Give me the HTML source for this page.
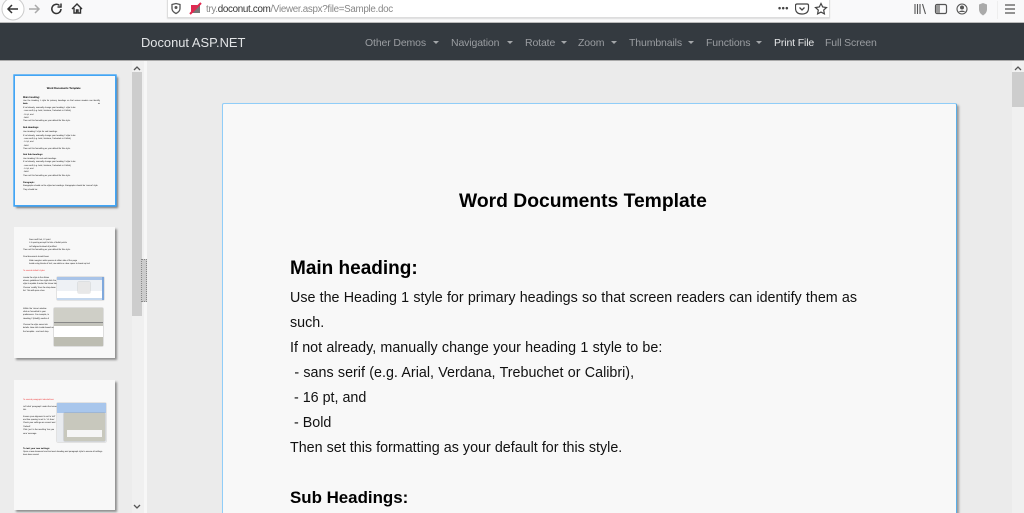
<!DOCTYPE html>
<html><head><meta charset="utf-8"><style>
html,body{margin:0;padding:0;width:1024px;height:513px;overflow:hidden;background:#ebebeb;font-family:"Liberation Sans",sans-serif}
div,span,svg{position:absolute}
#w{left:0;top:0;width:1024px;height:513px;overflow:hidden;background:#ebebeb}
.t{white-space:nowrap;color:#000}
.l{left:290px;font-size:14.3px;line-height:16px;white-space:nowrap;color:#111}
.j{width:567px;text-align:justify;text-align-last:justify}
.n{top:36px;font-size:10.5px;line-height:14px;color:#9a9da1;white-space:nowrap;letter-spacing:-.13px}
.c{top:41px;width:0;height:0;border-left:3.5px solid transparent;border-right:3.5px solid transparent;border-top:3px solid #a3a6a9}
.p{background:#f8f8f8;box-shadow:2px 2px 2px #8f8f8f;left:15px;width:100px;height:130px}
.x{font-size:2.05px;line-height:3px;white-space:nowrap;color:#111;left:8px;text-rendering:geometricPrecision}
.m{line-height:3.4px}
.b{font-weight:bold;color:#000;font-size:2.5px}
</style></head><body><div id="w">
<div style="left:0;top:0;width:1024px;height:23px;background:#f9f9fa;border-bottom:1px solid #bbb;box-sizing:border-box"></div>
<div style="left:167px;top:-2px;width:663px;height:20px;background:#fff;border:1px solid #ddd;box-sizing:border-box;box-shadow:0 1px 1px #ddd"></div>
<svg style="left:0;top:0" width="100" height="22" viewBox="0 0 100 22" fill="none">
<circle cx="13" cy="9" r="11" fill="#fff" stroke="#ccc"/>
<path d="M18 9H8M12 5L8 9l4 4" stroke="#333" stroke-width="1.5"/>
<path d="M39 9H29M35 5l4 4-4 4" stroke="#aaa" stroke-width="1.5"/>
<path d="M61 9a4.6 4.6 0 1 1-1.5-3.5M61 3.5V7h-3.5" stroke="#333" stroke-width="1.5"/>
<path d="M72 9l5-5 5 5M74 8v5h2.500v-3h1.500v3h2.500V8" stroke="#333" stroke-width="1.4"/>
</svg>
<svg style="left:170px;top:1px" width="35" height="16" viewBox="0 0 35 16" fill="none">
<path d="M2 3.500l4-1 4 1v4q0 3-4 5q-4-2-4-5z" stroke="#555" stroke-width="1.300"/>
<circle cx="6" cy="6.500" r="1.500" fill="#555"/>
<rect x="21" y="4" width="9" height="8" fill="#777"/><path d="M20 13L31 2" stroke="#e22850" stroke-width="2"/>
<path d="M21 4h6l-6 7z" fill="#e22850"/>
</svg>
<div class="t" style="left:206px;top:3px;font-size:9.800px;line-height:13px;color:#888;letter-spacing:-.3px">try.<span style="position:static;color:#333">doconut.com</span>/Viewer.aspx?file=Sample.doc</div>
<div class="t" style="left:778px;top:2px;font-size:9px;line-height:12px;color:#444;font-weight:bold;letter-spacing:.5px">•••</div>
<svg style="left:795px;top:1px" width="36" height="16" viewBox="0 0 36 16" fill="none">
<path d="M2 3h10q1.500 0 1.500 1.500V7q0 6-6.500 6Q.5 13 .5 7V4.500Q.5 3 2 3z" stroke="#444" stroke-width="1.200"/>
<path d="M4.500 6.500L7 9l2.500-2.500" stroke="#444" stroke-width="1.300"/>
<path d="M26 2.500l1.700 3.500 3.800.5-2.800 2.600.7 3.800-3.400-1.800-3.400 1.800.7-3.800-2.800-2.600 3.800-.5z" stroke="#444" stroke-width="1.200"/>
</svg>
<svg style="left:910px;top:1px" width="114" height="18" viewBox="0 0 114 18" fill="none">
<path d="M5 3v10M7.500 3v10M10 3v10M12.500 3l3 10" stroke="#555" stroke-width="1.100"/>
<rect x="25.500" y="3.500" width="11" height="9" rx="1.500" stroke="#555" stroke-width="1.200"/><rect x="26" y="4" width="4" height="8" fill="#999"/>
<circle cx="52" cy="8" r="5" stroke="#555" stroke-width="1.100"/><circle cx="52" cy="6.500" r="2" fill="#555"/><path d="M48.500 11q3.500-3 7 0" fill="#555"/>
<path d="M69 3.500l4-1.500 4 1.500v5q0 3.500-4 6q-4-2.500-4-6z" fill="#aaa"/>
<path d="M95 4h10M95 8h10M95 12h10" stroke="#555" stroke-width="1.300"/>
<path d="M87.500 0v20" stroke="#eee"/>
</svg>

<div style="left:0;top:23px;width:1024px;height:37px;background:#343a40;border-bottom:1px solid #aaa"></div>
<div class="t" style="left:141px;top:35px;font-size:12.900px;line-height:15px;color:#e2e4e6">Doconut ASP.NET</div>
<div class="n" style="left:365px">Other Demos</div><div class="c" style="left:433px"></div>
<div class="n" style="left:451px">Navigation</div><div class="c" style="left:507px"></div>
<div class="n" style="left:525px">Rotate</div><div class="c" style="left:561px"></div>
<div class="n" style="left:578px">Zoom</div><div class="c" style="left:611px"></div>
<div class="n" style="left:629px">Thumbnails</div><div class="c" style="left:688px"></div>
<div class="n" style="left:706px">Functions</div><div class="c" style="left:756px"></div>
<div class="n" style="left:774px;color:#e6e7e8">Print File</div>
<div class="n" style="left:825px">Full Screen</div>

<!-- left panel -->
<div style="left:0;top:61px;width:132px;height:452px;background:#ececec"></div>
<div style="left:132px;top:61px;width:12px;height:452px;background:#f0f0f0"></div>
<div style="left:132px;top:72px;width:10px;height:244px;background:#cdcdcd"></div>
<svg style="left:131px;top:63px" width="12" height="450" viewBox="0 0 12 450" fill="none">
<path d="M3 7l3-3 3 3" stroke="#555" stroke-width="1.300"/><path d="M3 442l3 3 3-3" stroke="#555" stroke-width="1.300"/></svg>
<div style="left:144px;top:61px;width:3px;height:452px;background:#f7f7f7"></div>
<div style="left:141px;top:259px;width:6px;height:43px;background:#cbcbcb;border:1px dotted #888;box-sizing:border-box"></div>

<!-- thumb 1 -->
<div class="p" style="top:75px;border:1px solid #42a5f5;left:14px;width:100px;height:129px;box-shadow:0 0 0 .7px #42a5f5,2px 2px 2px #777"><div class="x b" style="left:31.700px;top:10.800px;font-size:2.650px">Word Documents Template</div>
<div class="x b" style="top:19.800px">Main heading:</div>
<div class="x" style="top:23.800px;width:77px;white-space:normal;text-align:justify;text-align-last:justify">Use the Heading 1 style for primary headings so that screen readers can identify them as</div>
<div class="x" style="top:26.800px">such.</div><div class="x" style="top:30.500px">If not already, manually change your heading 1 style to be:</div>
<div class="x" style="top:34px">- sans serif (e.g. Arial, Verdana, Trebuchet or Calibri),</div><div class="x" style="top:37.500px"> - 16 pt, and</div><div class="x" style="top:40.500px"> - Bold</div><div class="x" style="top:44px">Then set this formatting as your default for this style.</div>
<div class="x b" style="top:50.800px;font-size:2.300px">Sub Headings:</div>
<div class="x" style="top:54.800px">Use Heading 2 style for sub headings.</div><div class="x" style="top:58.500px">If not already, manually change your heading 2 style to be:</div><div class="x" style="top:61.800px">- sans serif (e.g. Arial, Verdana, Trebuchet or Calibri),</div><div class="x" style="top:65.200px"> - 14 pt, and</div><div class="x" style="top:68.500px"> - Bold</div><div class="x" style="top:71.800px">Then set this formatting as your default for this style.</div>
<div class="x b" style="top:78.200px;font-size:2.200px">Sub Sub Headings:</div>
<div class="x" style="top:81.800px">Use Heading 3 for sub sub headings.</div><div class="x" style="top:85.200px">If not already, manually change your heading 3 style to be:</div><div class="x" style="top:88.500px">- sans serif (e.g. Arial, Verdana, Trebuchet or Calibri),</div><div class="x" style="top:91.800px"> - 14 pt, and</div><div class="x" style="top:95.200px"> - Bold</div><div class="x" style="top:99.200px">Then set this formatting as your default for this style.</div>
<div class="x b" style="top:105.800px;font-size:2.200px">Paragraph:</div>
<div class="x" style="top:109.200px">Paragraphs should not be styled as headings. Paragraphs should be ‘normal’ style.</div><div class="x" style="top:112.500px">They should be:</div></div>

<!-- thumb 2 -->
<div class="p" style="top:227px;left:14px;width:101px;height:131px">
<div class="x" style="left:15px;top:11.500px">Sans serif font, 12 point</div><div class="x" style="left:15px;top:15px">1.5 spacing except for lists of bullet points</div><div class="x" style="left:15px;top:18.500px">Left aligned instead of justified</div><div class="x" style="left:9px;top:22px">Then set this formatting as your default for this style.</div>
<div class="x" style="left:9px;top:29px">Final document should have:</div><div class="x" style="left:15px;top:32.500px">Wide margins: wide spaces at either side of the page</div><div class="x" style="left:15px;top:36px">Avoid using blocks of text; use white or clear space to break up text</div>
<div class="x" style="left:9px;top:43px;color:#e33">To amend default styles:</div>
<div class="x m" style="left:9px;top:49.500px">Locate the style in the ribbon<br>above; guidelines then right click the<br>style to update it under the Home tab.<br>Choose ‘modify’ from the drop down<br>list. This will open a box.</div>
<div style="left:43px;top:50px;width:47px;height:23px;background:linear-gradient(#a9c4e8 0 3px,#eef1f5 3px 14px,#fff 14px 21px,#c5d8ee 21px);box-shadow:0 0 1px #888"></div>
<div style="left:88px;top:50px;width:2px;height:23px;background:#7fa8dc"></div>
<div style="left:64px;top:55px;width:12px;height:11px;background:#e8e8e8;box-shadow:0 0 1px #999"></div>
<div class="x m" style="left:9px;top:80.500px">Within the ‘Home’ window<br>click on formatted to your<br>preferences. For example, in<br>Heading 2 (Modify) section it</div>
<div class="x m" style="left:9px;top:97px">Choose the style name into<br>details. Now click inside based on<br>the template - and next step.</div>
<div style="left:40px;top:81px;width:49px;height:38px;background:linear-gradient(#cfcfc7 0 14px,#888 14px 15px,#c3c3bb 15px 18px,#fff 18px 29px,#bdbdb2 29px);box-shadow:0 0 1px #777"></div>
</div>

<!-- thumb 3 -->
<div class="p" style="top:380px;left:14px;width:101px;height:130px">
<div class="x" style="left:9px;top:19px;color:#e33">To amend paragraph indentations:</div>
<div class="x m" style="left:9px;top:25.500px">Left click ‘paragraph’ under the home<br>tab.</div>
<div class="x m" style="left:9px;top:35.500px">Ensure your alignment is set to ‘left’<br>and line spacing is set to ‘1.5 lines’.<br>Check your settings are correct and<br>‘Default’.<br>Click ‘yes’ to the resulting ‘Are you<br>sure’ message.</div>
<div style="left:43px;top:23px;width:49px;height:39px;background:linear-gradient(#a8c6ec 0 10px,#e8ebef 10px);box-shadow:0 0 1px #888"></div>
<div style="left:50px;top:33px;width:41px;height:28px;background:#c8c8bd;box-shadow:0 0 1px #777"></div>
<div style="left:53px;top:50px;width:35px;height:7px;background:#f5f5f5"></div>
<div class="x b" style="left:9px;top:68px;font-size:2.200px">To test your new settings:</div>
<div class="x m" style="left:9px;top:71px">Open a new document and test each heading and paragraph style to ensure all settings<br>have been saved.</div>
</div>

<!-- main scrollbar -->
<div style="left:1012px;top:61px;width:12px;height:452px;background:#f0f0f0"></div>
<div style="left:1012px;top:72px;width:12px;height:35px;background:#cdcdcd"></div>
<svg style="left:1012px;top:63px" width="12" height="10" viewBox="0 0 12 10" fill="none"><path d="M3 7l3-3 3 3" stroke="#555" stroke-width="1.300"/></svg>

<!-- page -->
<div style="left:222px;top:103px;width:735px;height:420px;background:#f8f8f8;border:1px solid #90cdf8;border-right:1px solid #5aaee8;box-sizing:border-box;box-shadow:2px 2px 2px #9a9a9a;border-radius:2px"></div>
<div class="t" style="left:459px;top:191px;font-size:19.300px;line-height:22px;font-weight:bold">Word Documents Template</div>
<div class="t" style="left:290px;top:258px;font-size:19px;line-height:22px;font-weight:bold">Main heading:</div>
<div class="l j" style="top:290px">Use the Heading 1 style for primary headings so that screen readers can identify them as</div>
<div class="l" style="top:315px">such.</div>
<div class="l" style="top:340px;word-spacing:.3px">If not already, manually change your heading 1 style to be:</div>
<div class="l" style="top:365px;word-spacing:.35px">&nbsp;- sans serif (e.g. Arial, Verdana, Trebuchet or Calibri),</div>
<div class="l" style="top:390px">&nbsp;- 16 pt, and</div>
<div class="l" style="top:415px">&nbsp;- Bold</div>
<div class="l" style="top:440px;word-spacing:.1px">Then set this formatting as your default for this style.</div>
<div class="t" style="left:290px;top:488px;font-size:16.900px;line-height:20px;font-weight:bold">Sub Headings:</div>
</div></body></html>
